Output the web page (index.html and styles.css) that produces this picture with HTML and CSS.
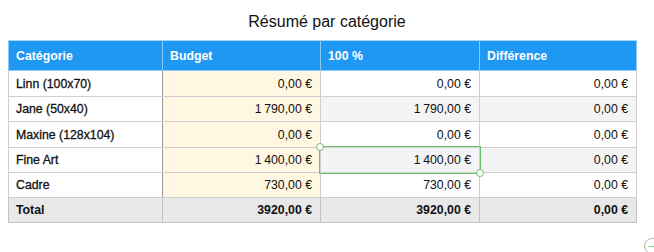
FILE: index.html
```html
<!DOCTYPE html>
<html lang="fr">
<head>
<meta charset="utf-8">
<title>Résumé par catégorie</title>
<link rel="stylesheet" href="styles.css">
</head>
<body>
<div class="page">
  <h1 class="title">Résumé par catégorie</h1>
  <table class="summary">
    <colgroup>
      <col class="c1"><col class="c2"><col class="c3"><col class="c4">
    </colgroup>
    <thead>
      <tr>
        <th>Catégorie</th>
        <th>Budget</th>
        <th>100 %</th>
        <th>Différence</th>
      </tr>
    </thead>
    <tbody>
      <tr class="tall">
        <td class="cat">Linn (100x70)</td>
        <td class="num budget">0,00 €</td>
        <td class="num">0,00 €</td>
        <td class="num">0,00 €</td>
      </tr>
      <tr class="alt">
        <td class="cat">Jane (50x40)</td>
        <td class="num budget">1&#8239;790,00 €</td>
        <td class="num">1&#8239;790,00 €</td>
        <td class="num">0,00 €</td>
      </tr>
      <tr class="tall">
        <td class="cat">Maxine (128x104)</td>
        <td class="num budget">0,00 €</td>
        <td class="num">0,00 €</td>
        <td class="num">0,00 €</td>
      </tr>
      <tr class="alt">
        <td class="cat">Fine Art</td>
        <td class="num budget">1&#8239;400,00 €</td>
        <td class="num selected">1&#8239;400,00 €<span class="sel-box"><span class="handle tl"></span><span class="handle br"></span></span></td>
        <td class="num">0,00 €</td>
      </tr>
      <tr>
        <td class="cat">Cadre</td>
        <td class="num budget">730,00 €</td>
        <td class="num">730,00 €</td>
        <td class="num">0,00 €</td>
      </tr>
    </tbody>
    <tfoot>
      <tr>
        <td>Total</td>
        <td class="num">3920,00 €</td>
        <td class="num">3920,00 €</td>
        <td class="num">0,00 €</td>
      </tr>
    </tfoot>
  </table>
  <svg class="corner-btn" width="20" height="20" viewBox="0 0 20 20" aria-hidden="true">
    <circle cx="9" cy="9" r="7.5" fill="#fff" stroke="#b5b5b5" stroke-width="1"/>
    <line x1="5.5" y1="9.5" x2="12.5" y2="9.5" stroke="#8fcf8f" stroke-width="1.2"/>
  </svg>
</div>
</body>
</html>
```

FILE: styles.css
```css
html, body {
  margin: 0;
  padding: 0;
  background: #ffffff;
}

body {
  font-family: "Liberation Sans", Arial, Helvetica, sans-serif;
  color: #111;
}

.page {
  position: relative;
  width: 654px;
  height: 252px;
  overflow: hidden;
  padding: 0 8px;
  box-sizing: border-box;
}

.title {
  margin: 0;
  height: 40px;
  box-sizing: border-box;
  padding-top: 12px;
  font-size: 16px;
  line-height: 20px;
  font-weight: normal;
  text-align: center;
  color: #111;
}

.summary {
  width: 628px;
  table-layout: fixed;
  border-collapse: collapse;
  font-size: 12.3px;
}

.c1 { width: 154px; }
.c2 { width: 158px; }
.c3 { width: 159px; }
.c4 { width: 157px; }

.summary th {
  height: 29px;
  padding: 0 7px;
  background: #1f98f4;
  color: #fff;
  font-weight: bold;
  text-align: left;
  border: 1px solid #8ecaf6;
  border-top-color: #a8d6f7;
}

.summary td {
  height: 24px;
  padding: 0 7px;
  border: 1px solid #cfcfcf;
  vertical-align: middle;
  white-space: nowrap;
}

.summary tr.tall td {
  height: 25px;
}

.summary .num {
  text-align: right;
  padding-right: 8px;
}

.summary td.cat {
  -webkit-text-stroke: 0.3px #111;
  border-right: 1px solid #9a9a9a;
}

.summary td.budget {
  background: #fff7e1;
}

.summary tr.alt td {
  background: #f4f4f4;
}

.summary tr.alt td.cat {
  background: #fff;
}

.summary tr.alt td.budget {
  background: #fff7e1;
}

.summary tfoot td {
  background: #e8e8e8;
  font-weight: bold;
  border-color: #c4c4c4;
  border-top-color: #8f8f8f;
}

.selected {
  position: relative;
}

.sel-box {
  position: absolute;
  z-index: 2;
  left: -2px;
  top: -2px;
  right: -2px;
  bottom: -2px;
  border: 1px solid #6cc16c;
  pointer-events: none;
}

.handle {
  position: absolute;
  width: 6px;
  height: 6px;
  border: 1px solid #6cc16c;
  border-radius: 50%;
  background: #fff;
}

.handle.tl {
  left: -4px;
  top: -4px;
}

.handle.br {
  right: -4px;
  bottom: -4px;
}

.corner-btn {
  position: absolute;
  left: 643px;
  top: 237px;
}
```
